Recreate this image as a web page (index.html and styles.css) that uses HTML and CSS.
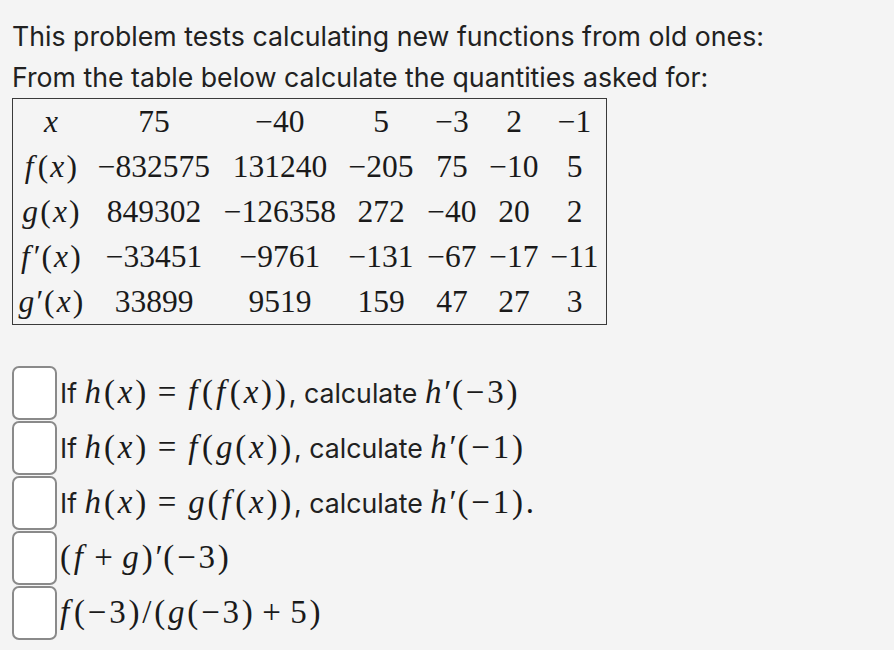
FILE: index.html
```html
<!DOCTYPE html>
<html lang="en">
<head>
<meta charset="utf-8">
<title>New functions from old</title>
<link rel="stylesheet" href="styles.css">
</head>
<body>
<div class="page">
  <p class="line">This problem tests calculating new functions from old ones:</p>
  <p class="line">From the table below calculate the quantities asked for:</p>
  <div class="table">
    <div class="cell head"><span class="mi">x</span></div>
    <div class="cell">75</div>
    <div class="cell">&minus;40</div>
    <div class="cell">5</div>
    <div class="cell">&minus;3</div>
    <div class="cell">2</div>
    <div class="cell">&minus;1</div>

    <div class="cell head"><span class="mi f">f</span>(<span class="mi">x</span>)</div>
    <div class="cell">&minus;832575</div>
    <div class="cell">131240</div>
    <div class="cell">&minus;205</div>
    <div class="cell">75</div>
    <div class="cell">&minus;10</div>
    <div class="cell">5</div>

    <div class="cell head"><span class="mi">g</span>(<span class="mi">x</span>)</div>
    <div class="cell">849302</div>
    <div class="cell">&minus;126358</div>
    <div class="cell">272</div>
    <div class="cell">&minus;40</div>
    <div class="cell">20</div>
    <div class="cell">2</div>

    <div class="cell head"><span class="mi f">f</span><span class="prime">&prime;</span>(<span class="mi">x</span>)</div>
    <div class="cell">&minus;33451</div>
    <div class="cell">&minus;9761</div>
    <div class="cell">&minus;131</div>
    <div class="cell">&minus;67</div>
    <div class="cell">&minus;17</div>
    <div class="cell">&minus;11</div>

    <div class="cell head"><span class="mi">g</span><span class="prime">&prime;</span>(<span class="mi">x</span>)</div>
    <div class="cell">33899</div>
    <div class="cell">9519</div>
    <div class="cell">159</div>
    <div class="cell">47</div>
    <div class="cell">27</div>
    <div class="cell">3</div>
  </div>

  <ul class="choices">
    <li class="choice">
      <span class="box"></span>
      <span class="label">If <span class="math"><span class="mi">h</span>(<span class="mi">x</span>)<span class="rel">=</span><span class="mi f">f</span>(<span class="mi f">f</span>(<span class="mi">x</span>))</span>, calculate <span class="math"><span class="mi">h</span><span class="prime">&prime;</span>(&minus;3)</span></span>
    </li>
    <li class="choice">
      <span class="box"></span>
      <span class="label">If <span class="math"><span class="mi">h</span>(<span class="mi">x</span>)<span class="rel">=</span><span class="mi f">f</span>(<span class="mi">g</span>(<span class="mi">x</span>))</span>, calculate <span class="math"><span class="mi">h</span><span class="prime">&prime;</span>(&minus;1)</span></span>
    </li>
    <li class="choice">
      <span class="box"></span>
      <span class="label">If <span class="math"><span class="mi">h</span>(<span class="mi">x</span>)<span class="rel">=</span><span class="mi">g</span>(<span class="mi f">f</span>(<span class="mi">x</span>))</span>, calculate <span class="math"><span class="mi">h</span><span class="prime">&prime;</span>(&minus;1).</span></span>
    </li>
    <li class="choice">
      <span class="box"></span>
      <span class="label"><span class="math">(<span class="mi f">f</span><span class="bin">+</span><span class="mi">g</span>)<span class="prime">&prime;</span>(&minus;3)</span></span>
    </li>
    <li class="choice">
      <span class="box"></span>
      <span class="label"><span class="math"><span class="mi f">f</span>(&minus;3)/(<span class="mi">g</span>(&minus;3)<span class="bin">+</span>5)</span></span>
    </li>
  </ul>
</div>
</body>
</html>
```

FILE: styles.css
```css
html, body {
  margin: 0;
  padding: 0;
  background: #f4f4f4;
}

.page {
  padding: 16px 0 0 12px;
  font-family: Inter, "Noto Sans", "Liberation Sans", sans-serif;
  font-size: 26.7px;
  color: #212121;
}

.line {
  margin: 0;
  line-height: 41px;
  white-space: nowrap;
}

.table {
  display: grid;
  grid-template-columns: 78px 126px 126px 76px 66px 58px 63px;
  grid-auto-rows: 45px;
  width: max-content;
  border: 1px solid #3a3a3a;
  font-family: "Liberation Serif", "DejaVu Serif", serif;
  font-size: 31.5px;
  color: #1a1a1a;
}

.cell {
  display: flex;
  justify-content: center;
  line-height: 45px;
  white-space: nowrap;
}

.cell.head {
  letter-spacing: 0.07em;
}

.mi {
  font-style: italic;
}

.mi.f {
  margin-right: 0.06em;
}

.prime {
  font-family: "Liberation Serif", "DejaVu Serif", serif;
  font-size: 1em;
  letter-spacing: 0.02em;
}

.choices {
  list-style: none;
  margin: 41px 0 0 0;
  padding: 0;
  display: flex;
  flex-direction: column;
  gap: 1px;
}

.choice {
  display: flex;
  align-items: center;
  height: 54px;
}

.box {
  flex: none;
  box-sizing: border-box;
  width: 45px;
  height: 54px;
  background: #fff;
  border: 2px solid #8a8a8a;
  border-radius: 7px;
  margin-right: 3px;
}

.label {
  white-space: nowrap;
  line-height: 1.2;
}

.math {
  font-family: "Liberation Serif", "DejaVu Serif", serif;
  font-size: 33px;
  letter-spacing: 0.085em;
  color: #1a1a1a;
}

.rel {
  margin: 0 0.27em;
}

.bin {
  margin: 0 0.2em;
}
```
